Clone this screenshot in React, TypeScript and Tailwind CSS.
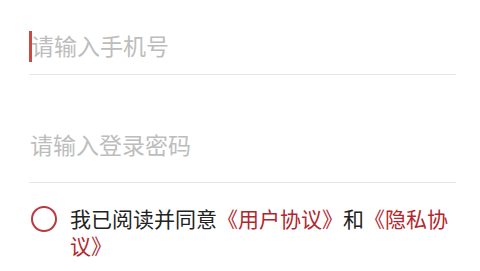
import React from 'react'

const font = { fontFamily: '"Noto Sans CJK SC", "Noto Sans", sans-serif' }

export default function App() {
  return (
    <div className="w-[480px] h-[271px] bg-white overflow-hidden" style={font}>
      <div className="pl-[29px] pr-[24px]">
        {/* Phone */}
        <div className="pt-[18px] pb-[2px] border-b border-[#e6e6e6]">
          <div className="relative h-[54px] flex items-center">
            <div className="absolute left-0 top-[13px] w-[3px] h-[31px] bg-[#cc4a44]" />
            <input
              className="w-full h-full pl-[2px] outline-none text-[23px] text-[#222] placeholder:text-[#bdbdbd] caret-transparent bg-transparent"
              placeholder="请输入手机号"
            />
          </div>
        </div>

        {/* Password */}
        <div className="pt-[42px] pb-[11px] border-b border-[#e6e6e6]">
          <div className="h-[54px] flex items-center">
            <input
              type="password"
              className="w-full h-full pl-[1px] outline-none text-[23px] text-[#222] placeholder:text-[#bdbdbd] bg-transparent"
              placeholder="请输入登录密码"
            />
          </div>
        </div>

        {/* Agreement */}
        <div className="mt-[22px] flex items-start gap-[13px] pl-[2px]">
          <div className="mt-[1px] w-[26px] h-[26px] shrink-0 rounded-full border-2 border-[#b73a3d]" />
          <p className="text-[21px] leading-[27px] text-[#222]">
            我已阅读并同意<span className="text-[#b3262b]">《用户协议》</span>和<span className="text-[#b3262b]">《隐私协议》</span>
          </p>
        </div>
      </div>
    </div>
  )
}
